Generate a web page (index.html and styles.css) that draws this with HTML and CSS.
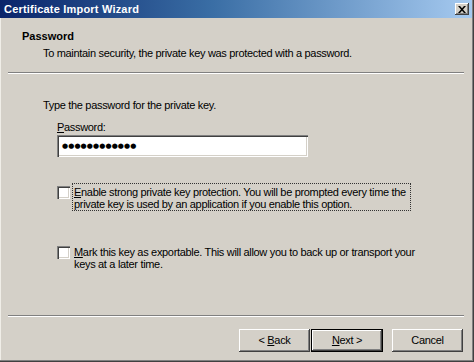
FILE: index.html
```html
<!DOCTYPE html>
<html>
<head>
<meta charset="utf-8">
<link rel="stylesheet" href="styles.css">
</head>
<body>
<div class="window">
  <div class="titlebar">
    <span class="title">Certificate Import Wizard</span>
    <span class="close"><svg width="8" height="7" viewBox="0 0 8 7"><path d="M0 0h2l2 2.3L6 0h2L5 3.5 8 7H6L4 4.7 2 7H0l3-3.5z" fill="#000"/></svg></span>
  </div>
  <div class="header">
    <div class="h-title">Password</div>
    <div class="h-sub">To maintain security, the private key was protected with a password.</div>
  </div>
  <div class="sep"></div>
  <div class="content">
    <div class="prompt">Type the password for the private key.</div>
    <div class="label"><u>P</u>assword:</div>
    <div class="input"><span class="dots">●●●●●●●●●●●●</span></div>
    <div class="check check-first">
      <span class="box"></span>
      <span class="cb-text focus"><u>E</u>nable strong private key protection. You will be prompted every time the<br>private key is used by an application if you enable this option.</span>
    </div>
    <div class="check check-second">
      <span class="box"></span>
      <span class="cb-text"><u>M</u>ark this key as exportable. This will allow you to back up or transport your<br>keys at a later time.</span>
    </div>
  </div>
  <div class="sep"></div>
  <div class="buttons">
    <span class="btn"><span>&lt; <u>B</u>ack</span></span>
    <span class="btn btn-default"><span class="btn-inner"><span><u>N</u>ext &gt;</span></span></span>
    <span class="btn btn-cancel"><span>Cancel</span></span>
  </div>
</div>
</body>
</html>
```
FILE: styles.css
```css
html, body {
  margin: 0;
  padding: 0;
  background: #d4d0c8;
}
.window {
  width: 474px;
  height: 362px;
  box-sizing: border-box;
  display: flex;
  flex-direction: column;
  background: #d4d0c8;
  box-shadow: inset -1px -1px #404040, inset -2px -2px #808080, inset 1px 0 #f0eee8;
  font-family: "Liberation Sans", Arial, sans-serif;
  font-size: 11px;
  letter-spacing: -0.32px;
  line-height: 13px;
  color: #000;
  padding-bottom: 2px;
}
.titlebar {
  height: 18px;
  margin-right: 2px;
  flex: none;
  display: flex;
  align-items: center;
  justify-content: space-between;
  background: linear-gradient(to right, #0a246a 0%, #3a6ea5 45%, #a6caf0 100%);
}
.title {
  color: #fff;
  font-weight: bold;
  font-size: 11px;
  letter-spacing: 0.2px;
  padding-left: 4px;
}
.close {
  width: 14px;
  height: 12px;
  margin-right: 3px;
  background: #d4d0c8;
  box-sizing: border-box;
  box-shadow: inset -1px -1px #404040, inset 1px 1px #fff, inset -2px -2px #808080;
  display: flex;
  align-items: center;
  justify-content: center;
}
.header {
  flex: none;
  padding-top: 12px;
}
.h-title {
  font-weight: bold;
  letter-spacing: 0;
  padding-left: 22px;
}
.h-sub {
  margin-top: 4px;
  padding-left: 43px;
}
.sep {
  flex: none;
  margin: 12px 10px 0 8px;
  border-top: 1px solid #808080;
  border-bottom: 1px solid #fff;
  height: 0;
}
.content {
  flex: 1;
  padding-left: 43px;
}
.prompt {
  margin-top: 25px;
}
.label {
  margin-top: 9px;
  padding-left: 14px;
}
.input {
  margin: 1px 0 0 14px;
  width: 251px;
  height: 22px;
  box-sizing: border-box;
  background: #fff;
  box-shadow: inset 1px 1px #808080, inset 2px 2px #404040, inset -1px -1px #fff, inset -2px -2px #d4d0c8;
  display: flex;
  align-items: center;
  padding-left: 5px;
}
.dots {
  font-family: "DejaVu Sans", sans-serif;
  font-size: 7px;
  letter-spacing: 0.1px;
  line-height: 10px;
}
.check {
  display: flex;
  align-items: flex-start;
  padding-left: 14px;
  line-height: 12px;
}
.check-first {
  margin-top: 26px;
}
.check-second {
  margin-top: 32px;
}
.box {
  flex: none;
  width: 13px;
  height: 13px;
  margin-top: 3px;
  box-sizing: border-box;
  background: #fff;
  box-shadow: inset 1px 1px #808080, inset 2px 2px #404040, inset -1px -1px #fff, inset -2px -2px #d4d0c8;
}
.cb-text {
  margin-left: 2px;
  padding: 2px 4px 0 1px;
  border: 1px dotted transparent;
}
.cb-text.focus {
  border-color: #333;
}
.buttons {
  flex: none;
  display: flex;
  justify-content: flex-end;
  padding: 12px 11px 8px 0;
}
.btn {
  width: 71px;
  height: 23px;
  box-sizing: border-box;
  display: flex;
  align-items: center;
  justify-content: center;
  background: #d4d0c8;
  box-shadow: inset -1px -1px #404040, inset 1px 1px #fff, inset -2px -2px #808080;
}
.btn-default {
  width: 72px;
  margin-left: 1px;
  border: 1px solid #000;
  box-shadow: none;
}
.btn-inner {
  width: 100%;
  height: 100%;
  display: flex;
  align-items: center;
  justify-content: center;
  box-shadow: inset -1px -1px #404040, inset 1px 1px #fff, inset -2px -2px #808080;
}
.btn-cancel {
  margin-left: 9px;
}
```
